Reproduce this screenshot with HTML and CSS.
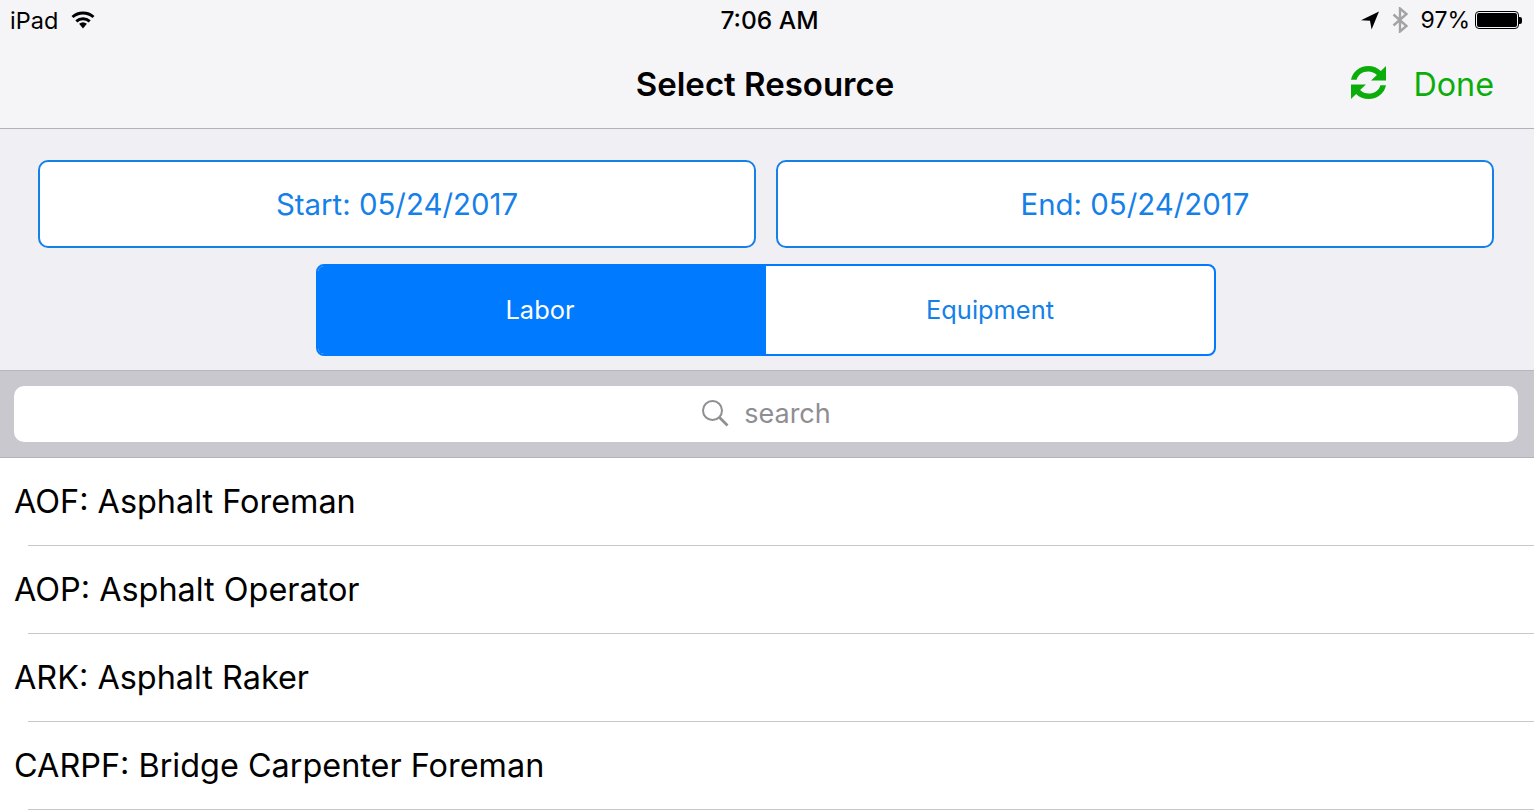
FILE: index.html
```html
<!DOCTYPE html>
<html lang="en">
<head>
<meta charset="utf-8">
<title>Select Resource</title>
<link rel="stylesheet" href="styles.css">
</head>
<body>
<header class="chrome">
  <div class="status">
    <div class="status-left">
      <span>iPad</span>
      <svg class="wifi" viewBox="0 0 26 20" width="26" height="20"><path d="M13 18.500l-3.900-4.700a6 6 0 0 1 7.800 0z" fill="#000"/><path d="M6.300 11.400a10 10 0 0 1 13.400 0M2.500 7a15.600 15.600 0 0 1 21 0" fill="none" stroke="#000" stroke-width="3"/></svg>
    </div>
    <div class="status-time">7:06 AM</div>
    <div class="status-right">
      <svg class="loc" viewBox="0 0 20 20" width="20" height="20"><path d="M19 1.500L1 10.200l9 .6 1.600 8.700z" fill="#000"/></svg>
      <svg class="bt" viewBox="0 0 16 26" width="16" height="26"><path d="M1.500 7.500l13 11.500-6.500 5.500V1.500L14.500 7 1.500 18.500" fill="none" stroke="#a3a3a6" stroke-width="2.400"/></svg>
      <span class="pct">97%</span>
      <div class="battery"><div class="battery-fill"></div></div>
      <div class="battery-tip"></div>
    </div>
  </div>
  <nav class="navbar">
    <h1 class="nav-title">Select Resource</h1>
    <div class="nav-actions">
      <svg class="refresh" viewBox="3 3 30 30" width="35" height="33" preserveAspectRatio="none"><path d="M3 15.500C4.200 8.300 10.300 3 17.800 3c4.300 0 8.100 1.700 10.800 4.600L33 3.100v13H20.200l5-5a10.200 10.200 0 0 0-7.400-3.200c-5 0-8.900 3.100-10 7.600z" fill="#0bad0b"/><path d="M33 20.500C31.800 27.700 25.700 33 18.200 33c-4.300 0-8.100-1.700-10.800-4.600L3 32.900v-13h12.800l-5 5a10.200 10.200 0 0 0 7.400 3.200c5 0 8.900-3.100 10-7.600z" fill="#0bad0b"/></svg>
      <span class="done">Done</span>
    </div>
  </nav>
</header>
<section class="filters">
  <div class="date-row">
    <button class="date-btn">Start: 05/24/2017</button>
    <button class="date-btn">End: 05/24/2017</button>
  </div>
  <div class="segment">
    <div class="seg seg-on">Labor</div>
    <div class="seg">Equipment</div>
  </div>
</section>
<div class="searchbar">
  <div class="search-field">
    <svg class="glass" viewBox="0 0 28 28" width="28" height="28"><circle cx="11.500" cy="11.500" r="9.500" fill="none" stroke="#8e8e93" stroke-width="2"/><path d="M18.500 18.500l8 8" fill="none" stroke="#8e8e93" stroke-width="2.600"/></svg>
    <span>search</span>
  </div>
</div>
<ul class="list">
  <li class="row">AOF: Asphalt Foreman</li>
  <li class="row">AOP: Asphalt Operator</li>
  <li class="row">ARK: Asphalt Raker</li>
  <li class="row">CARPF: Bridge Carpenter Foreman</li>
</ul>
</body>
</html>
```
FILE: styles.css
```css
* { box-sizing: border-box; }
html, body { margin: 0; height: 100%; }
body {
  width: 1534px;
  height: 810px;
  overflow: hidden;
  background: #fff;
  font-family: Inter, "Liberation Sans", sans-serif;
  color: #000;
}
.chrome {
  height: 129px;
  background: #f5f5f8;
  border-bottom: 1px solid #b2b2b6;
}
.status {
  height: 40px;
  display: grid;
  grid-template-columns: 1fr auto 1fr;
  align-items: center;
  padding: 0 12px 0 10px;
  font-size: 23px;
}
.status-left { display: flex; align-items: center; gap: 12px; }
.status-left span { font-size: 23.500px; }
.wifi { margin-top: -1px; }
.status-time { font-weight: 500; font-size: 24.500px; margin-left: 7px; }
.status-right { display: flex; align-items: center; justify-content: flex-end; }
.loc { margin-right: 12px; }
.bt { margin-right: 13px; }
.pct { margin-right: 5px; }
.battery {
  width: 44px;
  height: 18px;
  border: 1px solid #000;
  border-radius: 4px;
  padding: 1px;
}
.battery-fill { height: 100%; background: #000; border-radius: 2px; }
.battery-tip { width: 3px; height: 7px; background: #000; border-radius: 0 2px 2px 0; }
.navbar {
  height: 88px;
  display: flex;
  align-items: center;
  justify-content: center;
  position: relative;
}
.nav-title {
  margin: 0 4px 0 0;
  font-size: 33px;
  font-weight: 600;
}
.nav-actions {
  position: absolute;
  right: 40px;
  top: 0;
  height: 88px;
  display: flex;
  align-items: center;
  gap: 27px;
}
.refresh { margin-top: -4px; }
.done { font-size: 32.300px; color: #0bad0b; }
.filters {
  height: 242px;
  background: #efeff4;
  padding: 31px 40px 0 38px;
  border-bottom: 1px solid #b8b8bc;
  display: flex;
  flex-direction: column;
  align-items: center;
}
.date-row {
  width: 100%;
  display: grid;
  grid-template-columns: 1fr 1fr;
  gap: 20px;
}
.date-btn {
  height: 88px;
  background: #fff;
  border: 2px solid #1580e8;
  border-radius: 10px;
  color: #1580e8;
  font: 400 29.400px Inter, "Liberation Sans", sans-serif;
}
.segment {
  margin-top: 16px;
  width: 900px;
  height: 92px;
  display: grid;
  grid-template-columns: 1fr 1fr;
  background: #fff;
  border: 2px solid #007aff;
  border-radius: 8px;
  overflow: hidden;
  font-size: 25.400px;
}
.seg {
  display: flex;
  align-items: center;
  justify-content: center;
  padding-bottom: 2px;
  color: #1580e8;
}
.seg-on { background: #007aff; color: #fff; padding-right: 4px; }
.searchbar {
  height: 87px;
  background: #c8c8ce;
  border-bottom: 1px solid #b4b4b8;
  padding: 15px 16px 15px 14px;
}
.search-field {
  height: 56px;
  background: #fff;
  border-radius: 10px;
  display: flex;
  align-items: center;
  justify-content: center;
  gap: 15px;
  padding-bottom: 2px;
  color: #8e8e93;
  font-size: 27px;
}
.list { list-style: none; margin: 0; padding: 0; }
.row {
  height: 88px;
  display: flex;
  align-items: center;
  padding-left: 14px;
  padding-bottom: 2px;
  font-size: 32.400px;
  position: relative;
}
.row::after {
  content: "";
  position: absolute;
  left: 28px;
  right: 0;
  bottom: 0;
  height: 1px;
  background: #c8c8cc;
}
```
